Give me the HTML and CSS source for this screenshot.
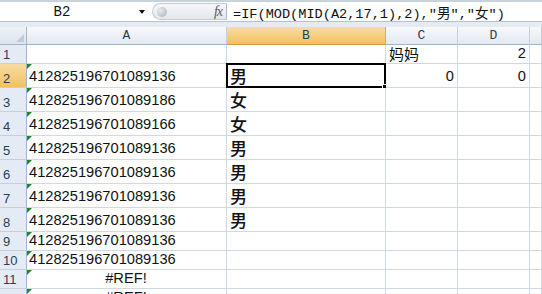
FILE: index.html
```html
<!DOCTYPE html>
<html lang="zh-CN">
<head>
    <meta charset="UTF-8">
    <title>Sheet1</title>
    <link rel="stylesheet" href="styles.css">
</head>
<body>
    <div class="formula-bar">
        <div class="fb-row">
            <div class="name-box">
                <span class="name-text">B2</span>
                <span class="name-arrow"></span>
            </div>
            <div class="fx-pill">
                <span class="fx-knob"></span>
                <span class="fx-label">fx</span>
            </div>
            <div class="formula-text">=IF(MOD(MID(A2,17,1),2),"男","女")</div>
        </div>
    </div>

    <div class="sheet">
        <!-- column headers -->
        <div class="corner"><span class="corner-tri"></span></div>
        <div class="col-head">A</div>
        <div class="col-head active">B</div>
        <div class="col-head">C</div>
        <div class="col-head">D</div>
        <div class="col-head"></div>

        <!-- row 1 -->
        <div class="row-head">1</div>
        <div class="cell"></div>
        <div class="cell"></div>
        <div class="cell cjk">妈妈</div>
        <div class="cell num">2</div>
        <div class="cell"></div>

        <!-- row 2 -->
        <div class="row-head active tall">2</div>
        <div class="cell txt tall">412825196701089136</div>
        <div class="cell sex tall"><span class="selection"><span class="fill-handle"></span></span>男</div>
        <div class="cell num tall">0</div>
        <div class="cell num tall">0</div>
        <div class="cell tall"></div>

        <div class="row-head tall">3</div>
        <div class="cell txt tall">412825196701089186</div>
        <div class="cell sex tall">女</div>
        <div class="cell tall"></div>
        <div class="cell tall"></div>
        <div class="cell tall"></div>

        <div class="row-head tall">4</div>
        <div class="cell txt tall">412825196701089166</div>
        <div class="cell sex tall">女</div>
        <div class="cell tall"></div>
        <div class="cell tall"></div>
        <div class="cell tall"></div>

        <div class="row-head tall">5</div>
        <div class="cell txt tall">412825196701089136</div>
        <div class="cell sex tall">男</div>
        <div class="cell tall"></div>
        <div class="cell tall"></div>
        <div class="cell tall"></div>

        <div class="row-head tall">6</div>
        <div class="cell txt tall">412825196701089136</div>
        <div class="cell sex tall">男</div>
        <div class="cell tall"></div>
        <div class="cell tall"></div>
        <div class="cell tall"></div>

        <div class="row-head tall">7</div>
        <div class="cell txt tall">412825196701089136</div>
        <div class="cell sex tall">男</div>
        <div class="cell tall"></div>
        <div class="cell tall"></div>
        <div class="cell tall"></div>

        <div class="row-head tall">8</div>
        <div class="cell txt tall">412825196701089136</div>
        <div class="cell sex tall">男</div>
        <div class="cell tall"></div>
        <div class="cell tall"></div>
        <div class="cell tall"></div>

        <div class="row-head">9</div>
        <div class="cell txt">412825196701089136</div>
        <div class="cell"></div>
        <div class="cell"></div>
        <div class="cell"></div>
        <div class="cell"></div>

        <div class="row-head">10</div>
        <div class="cell txt">412825196701089136</div>
        <div class="cell"></div>
        <div class="cell"></div>
        <div class="cell"></div>
        <div class="cell"></div>

        <div class="row-head">11</div>
        <div class="cell txt err">#REF!</div>
        <div class="cell"></div>
        <div class="cell"></div>
        <div class="cell"></div>
        <div class="cell"></div>

        <div class="row-head">12</div>
        <div class="cell txt err">#REF!</div>
        <div class="cell"></div>
        <div class="cell"></div>
        <div class="cell"></div>
        <div class="cell"></div>
    </div>
</body>
</html>
```

FILE: styles.css
```css
* {
    margin: 0;
    padding: 0;
    box-sizing: border-box;
}

body {
    background: white;
    font-family: 'Liberation Sans', Arial, sans-serif;
    overflow: hidden;
}

/* formula bar */
.formula-bar {
    height: 27px;
    background: #e6ebf1;
    border-top: 2px solid #c8d2dd;
}

.fb-row {
    height: 20px;
    display: flex;
    align-items: stretch;
    background: white;
    border-bottom: 1px solid #b6c2cf;
}

.name-box {
    width: 152px;
    display: flex;
    align-items: center;
    font-family: 'Liberation Mono', monospace;
    font-size: 14px;
    color: #111;
}

.name-text {
    width: 124px;
    text-align: center;
}

.name-arrow {
    margin-left: 15px;
    width: 0;
    height: 0;
    border-left: 3px solid transparent;
    border-right: 3px solid transparent;
    border-top: 4px solid #111;
}

.fx-pill {
    width: 75px;
    margin: 1px 0;
    border-radius: 9px 0 0 9px;
    background: linear-gradient(#f6f7f9, #e3e7ec);
    border: 1px solid #c3ccd6;
    border-right: 1px solid #a9b6c4;
    display: flex;
    align-items: center;
    justify-content: space-between;
    padding: 0 4px 0 4px;
}

.fx-knob {
    width: 10px;
    height: 10px;
    border-radius: 50%;
    background: radial-gradient(circle at 35% 35%, #e9ecef, #a9b0b8);
}

.fx-label {
    font-family: 'Liberation Serif', serif;
    font-style: italic;
    font-size: 14px;
    color: #5a5a5a;
    letter-spacing: -1px;
}

.formula-text {
    padding-left: 6px;
    display: flex;
    align-items: center;
    font-family: 'Liberation Mono', 'Noto Sans CJK SC', monospace;
    font-size: 13.6px;
    color: #111;
    white-space: nowrap;
}

/* grid */
.sheet {
    display: grid;
    grid-template-columns: 27px 200px 159px 72px 72px 1fr;
    grid-template-rows: 18px 19px repeat(7, 24px) repeat(4, 19px);
}

.corner,
.col-head,
.row-head,
.cell {
    border-right: 1px solid #d0d7e5;
    border-bottom: 1px solid #d0d7e5;
}

.corner {
    background: linear-gradient(#eef2f7, #dde4ee);
    border-right-color: #9eb6ce;
    border-bottom-color: #9eb6ce;
    position: relative;
}

.corner-tri {
    position: absolute;
    right: 2px;
    bottom: 2px;
    width: 0;
    height: 0;
    border-left: 8px solid transparent;
    border-bottom: 8px solid #c3cbd6;
}

.col-head {
    background: linear-gradient(#f7f9fb, #e4e9f0);
    border-right-color: #c5d0dc;
    border-bottom-color: #9eb6ce;
    text-align: center;
    font-family: 'Liberation Mono', monospace;
    font-size: 13px;
    line-height: 17px;
    color: #2b3d55;
}

.col-head.active {
    background: linear-gradient(#f9dca3, #f1c15f);
    border-right-color: #e2a84a;
    border-bottom-color: #d69c3c;
}

.row-head {
    background: #e4ebf5;
    border-right-color: #9eb6ce;
    border-bottom-color: #c5d0dc;
    font-size: 13px;
    color: #2b3d55;
    display: flex;
    align-items: flex-end;
    padding: 0 0 1px 3px;
}

.row-head.active {
    background: linear-gradient(#f9dca3, #f1c15f);
}

.cell {
    background: white;
    display: flex;
    align-items: flex-end;
    font-size: 14.67px;
    line-height: 17px;
    color: #111;
    padding: 0 3px 1px 3px;
    position: relative;
    white-space: nowrap;
}

.cell.tall {
    padding-bottom: 2px;
}

.txt {
    padding-left: 2px;
}

.txt::before {
    content: '';
    position: absolute;
    left: 0;
    top: 0;
    border-top: 5px solid #1f8a1f;
    border-right: 5px solid transparent;
}

.err {
    justify-content: center;
}

.num {
    justify-content: flex-end;
}

.cjk {
    font-family: 'Noto Sans CJK SC', sans-serif;
    font-size: 15px;
    line-height: 18px;
    padding-bottom: 0;
}

.sex {
    font-family: 'Noto Sans CJK SC', sans-serif;
    font-size: 17px;
    font-weight: 500;
    line-height: 20px;
    padding-bottom: 0;
}

.cell.sex.tall {
    padding-bottom: 1px;
}

/* active cell outline */
.selection {
    position: absolute;
    left: -1px;
    top: -1px;
    right: -1px;
    bottom: -1px;
    border: 2px solid #000;
}

.fill-handle {
    position: absolute;
    right: -4px;
    bottom: -4px;
    width: 6px;
    height: 6px;
    background: #000;
    border: 1px solid white;
}
```
